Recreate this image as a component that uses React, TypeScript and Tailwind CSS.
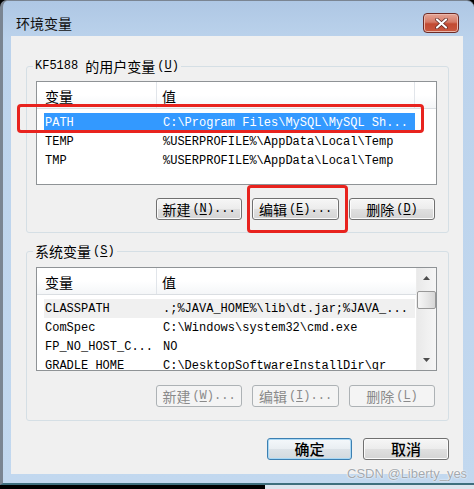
import type { ReactNode } from 'react';

const cjk = "font-['Noto_Sans_CJK_SC','Noto_Sans',sans-serif]";
const mono = "font-['Liberation_Mono','Noto_Sans_CJK_SC',monospace]";

type Row = { name: string; value: string; selected?: boolean; hover?: boolean };

const userRows: Row[] = [
  { name: 'PATH', value: 'C:\\Program Files\\MySQL\\MySQL Sh...', selected: true },
  { name: 'TEMP', value: '%USERPROFILE%\\AppData\\Local\\Temp' },
  { name: 'TMP', value: '%USERPROFILE%\\AppData\\Local\\Temp' },
];

const systemRows: Row[] = [
  { name: 'CLASSPATH', value: '.;%JAVA_HOME%\\lib\\dt.jar;%JAVA_...', hover: true },
  { name: 'ComSpec', value: 'C:\\Windows\\system32\\cmd.exe' },
  { name: 'FP_NO_HOST_C...', value: 'NO' },
  { name: 'GRADLE_HOME', value: 'C:\\DesktopSoftwareInstallDir\\gr' },
];

function Hotkey({ zh, hot, dots }: { zh: string; hot: string; dots?: boolean }) {
  return (
    <span className="flex items-center whitespace-nowrap">
      <span className={`${cjk} text-[14px] leading-[16px]`}>{zh}</span>
      <span className={`${mono} ml-[2px] text-[12px] leading-[16px]`}>
        (<span className="underline underline-offset-2">{hot}</span>)
      </span>
      {dots && <span className={`${mono} text-[12px] leading-[16px]`}>...</span>}
    </span>
  );
}

function Btn({
  w,
  children,
  disabled,
  primary,
}: {
  w: string;
  children: ReactNode;
  disabled?: boolean;
  primary?: boolean;
}) {
  const tone = disabled
    ? 'border-[#adb2b5] bg-[#f4f4f4] text-[#8a8a8a]'
    : primary
      ? 'border-[#3c7fb1] bg-[linear-gradient(#f4f8fb,#e9eef2_50%,#dde3e8_50%,#d2d9de)] text-black shadow-[inset_0_0_0_1px_#a8d8f5]'
      : 'border-[#707070] bg-[linear-gradient(#f6f6f6,#ececec_50%,#e0e0e0_50%,#d4d4d4)] text-black shadow-[inset_0_0_0_1px_#fbfbfb]';
  return (
    <div className={`flex h-[22px] ${w} items-center justify-center rounded-[3px] border ${tone}`}>
      {children}
    </div>
  );
}

function Arrow({ up }: { up?: boolean }) {
  return (
    <svg width="7" height="4" viewBox="0 0 7 4">
      <path d={up ? 'M0 4 L3.5 0 L7 4 Z' : 'M0 0 L3.5 4 L7 0 Z'} fill="#4d4d4d" />
    </svg>
  );
}

function Scrollbar() {
  return (
    <div className="flex w-[20px] flex-col items-center border-l border-[#ececec] bg-[linear-gradient(90deg,#e9e9e9,#f6f6f6)]">
      <div className="flex h-[20px] items-center justify-center">
        <Arrow up />
      </div>
      <div className="mt-[3px] h-[18px] w-[19px] rounded-[2px] border border-[#979797] bg-[linear-gradient(90deg,#f6f6f6,#e4e4e4_60%,#d6d6d6)]" />
      <div className="flex-1" />
      <div className="flex h-[20px] items-center justify-center">
        <Arrow />
      </div>
    </div>
  );
}

function VarList({ rows, scroll }: { rows: Row[]; scroll?: boolean }) {
  return (
    <div className="flex h-[104px] w-[401px] overflow-hidden border border-[#8f9396] bg-white">
      <div className="flex min-w-0 flex-1 flex-col">
        <div className="flex h-[27px] shrink-0 border-b border-[#dadee2] bg-[linear-gradient(#ffffff,#ffffff_50%,#f4f6f8)]">
          <div className={`${cjk} w-[120px] border-r border-[#e1e5ea] pl-[8px] pt-[5px] text-[14px] leading-[18px]`}>
            变量
          </div>
          <div className={`${cjk} ${scroll ? 'flex-1' : 'w-[258px] border-r border-[#e1e5ea]'} pl-[5px] pt-[5px] text-[14px] leading-[18px]`}>
            值
          </div>
          {!scroll && <div className="flex-1" />}
        </div>
        <div className="mt-[4px] flex flex-col pl-[7px]">
          {rows.map((r) => (
            <div
              key={r.name}
              className={`${mono} flex h-[19px] w-[371px] shrink-0 items-center whitespace-nowrap text-[12px] ${
                r.selected ? 'bg-[#3399ff] text-white' : r.hover ? 'bg-[#f0f0f0] text-black' : 'text-black'
              }`}
            >
              <span className="w-[119px] shrink-0 pl-px">{r.name}</span>
              <span>{r.value}</span>
            </div>
          ))}
        </div>
      </div>
      {scroll && <Scrollbar />}
    </div>
  );
}

function Group({ legend, hot, children, className }: { legend: ReactNode; hot: string; children: ReactNode; className: string }) {
  return (
    <fieldset className={`ml-[15px] w-[423px] rounded-[3px] border border-[#d5dfe5] ${className}`}>
      <legend className="ml-[6px] flex items-center px-[2px] leading-[16px] text-black">
        {legend}
        <span className={`${mono} ml-[2px] text-[12px]`}>
          (<span className="underline underline-offset-2">{hot}</span>)
        </span>
      </legend>
      {children}
    </fieldset>
  );
}

export default function App() {
  return (
    <div className="relative flex h-[489px] w-[474px] flex-col overflow-hidden bg-black">
      <div className="flex h-[485px] flex-col rounded-t-[7px] border-b-2 border-l-[3px] border-t border-b-[#3e6f7d] border-l-[#7a8592] border-t-[#7a8592] bg-[linear-gradient(#aec7e4,#bcd3ec_40px,#c2d8ef)]">
        <div className="flex h-[35px] shrink-0 items-start justify-between">
          <div className={`${cjk} pl-[13px] pt-[14px] text-[14px] leading-[16px] text-[#111]`}>环境变量</div>
          <div className="mr-[15px] mt-[12px] flex h-[20px] w-[36px] items-center justify-center rounded-[4px] border border-[#6e2b25] bg-[linear-gradient(#e4a596,#d57a66_45%,#c24a32_55%,#c9583f)] shadow-[inset_0_0_0_1px_#eab7ab]">
            <svg width="13" height="11" viewBox="0 0 13 11">
              <path d="M2 1.5 L11 9.5 M11 1.5 L2 9.5" stroke="#5a2520" strokeWidth="3.6" strokeLinecap="round" />
              <path d="M2 1.5 L11 9.5 M11 1.5 L2 9.5" stroke="#ffffff" strokeWidth="2.2" strokeLinecap="round" />
            </svg>
          </div>
        </div>
        <div className="flex flex-1 flex-col pb-[9px] pl-[8px] pr-[11px]">
          <div className="flex flex-1 flex-col bg-[#f0f0f0] pt-[22px]">
            <Group
              legend={
                <>
                  <span className={`${mono} text-[12px]`}>KF5188</span>
                  <span className={`${cjk} ml-[7px] text-[14px]`}>的用户变量</span>
                </>
              }
              hot="U"
              className=""
            >
              <div className="flex flex-col pb-[12px] pl-[9px] pt-[7px]">
                <VarList rows={userRows} />
                <div className="mt-[13px] flex justify-end gap-[10px] pr-[13px]">
                  <Btn w="w-[86px]"><Hotkey zh="新建" hot="N" dots /></Btn>
                  <Btn w="w-[87px]"><Hotkey zh="编辑" hot="E" dots /></Btn>
                  <Btn w="w-[86px]"><Hotkey zh="删除" hot="D" /></Btn>
                </div>
              </div>
            </Group>
            <Group legend={<span className={`${cjk} text-[14px]`}>系统变量</span>} hot="S" className="mt-[10px]">
              <div className="flex flex-col pb-[13px] pl-[9px] pt-[8px]">
                <VarList rows={systemRows} scroll />
                <div className="mt-[14px] flex justify-end gap-[10px] pr-[13px]">
                  <Btn w="w-[86px]" disabled><Hotkey zh="新建" hot="W" dots /></Btn>
                  <Btn w="w-[87px]" disabled><Hotkey zh="编辑" hot="I" dots /></Btn>
                  <Btn w="w-[86px]" disabled><Hotkey zh="删除" hot="L" /></Btn>
                </div>
              </div>
            </Group>
            <div className="mr-[14px] mt-[17px] flex justify-end gap-[11px]">
              <Btn w="w-[85px]" primary>
                <span className={`${cjk} text-[15px] font-medium leading-[16px]`}>确定</span>
              </Btn>
              <Btn w="w-[86px]">
                <span className={`${cjk} text-[15px] font-medium leading-[16px]`}>取消</span>
              </Btn>
            </div>
          </div>
        </div>
      </div>
      <div className="flex flex-1">
        <div className="w-[265px] bg-black" />
        <div className="flex-1 bg-[#dde5ee]" />
      </div>

      {/* red annotation boxes */}
      <div className="absolute left-[17px] top-[104px] h-[29px] w-[407px] rounded-[4px] border-[3px] border-[#e8231e]" />
      <div className="absolute left-[247px] top-[185px] h-[48px] w-[101px] rounded-[4px] border-[3px] border-[#e8231e]" />

      <div className="absolute left-[347px] top-[466px] font-['Liberation_Sans',sans-serif] text-[13px] leading-[16px] text-[#a3a8ad] [text-shadow:0_0_1px_#ffffff,0_0_2px_#ffffff]">
        CSDN @Liberty_yes
      </div>
    </div>
  );
}
